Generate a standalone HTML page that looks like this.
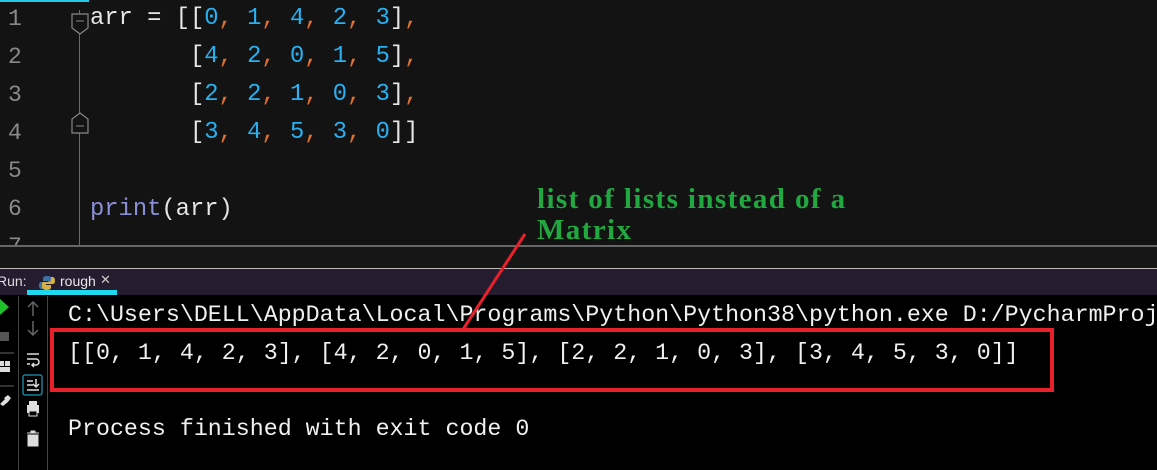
<!DOCTYPE html>
<html><head><style>
body{margin:0;width:1157px;height:470px;background:#000;position:relative;overflow:hidden;font-family:"Liberation Mono",monospace}
.a{position:absolute}
.ln{position:absolute;left:8px;color:#8a8a8a;font-size:23px;font-family:"Liberation Mono",monospace}
.code{position:absolute;left:90px;font-size:23.8px;color:#e6e6e6;white-space:pre;letter-spacing:0}
.n{color:#2ab0f0}.c{color:#e07030}.k{color:#8b8fd8}
.con{position:absolute;left:68px;font-size:23.3px;color:#f0f0f0;white-space:pre}
</style></head><body>
<div class="a" style="left:0;top:0;width:1157px;height:245px;background:#131313"></div>
<div class="a" style="left:0;top:0;width:89px;height:2px;background:#21c8e8"></div>
<div class="a" style="left:79px;top:10px;width:1px;height:235px;background:#6a6a6a"></div>
<svg class="a" style="left:71px;top:12px" width="18" height="124"><path d="M1 2h16v14l-8 6-8-6z" fill="#131313" stroke="#888" stroke-width="1.2"/><path d="M5 9h8" stroke="#888"/><path d="M1 121h16v-14l-8-6-8 6z" fill="#131313" stroke="#888" stroke-width="1.2"/><path d="M5 114h8" stroke="#888"/></svg>
<div class="ln" style="top:6px">1</div><div class="ln" style="top:44px">2</div><div class="ln" style="top:82px">3</div><div class="ln" style="top:120px">4</div><div class="ln" style="top:158px">5</div><div class="ln" style="top:196px">6</div><div class="ln" style="top:234px">7</div>
<div class="code" style="top:5px">arr = [[<span class="n">0</span><span class="c">,</span> <span class="n">1</span><span class="c">,</span> <span class="n">4</span><span class="c">,</span> <span class="n">2</span><span class="c">,</span> <span class="n">3</span>]<span class="c">,</span></div>
<div class="code" style="top:43px">       [<span class="n">4</span><span class="c">,</span> <span class="n">2</span><span class="c">,</span> <span class="n">0</span><span class="c">,</span> <span class="n">1</span><span class="c">,</span> <span class="n">5</span>]<span class="c">,</span></div>
<div class="code" style="top:81px">       [<span class="n">2</span><span class="c">,</span> <span class="n">2</span><span class="c">,</span> <span class="n">1</span><span class="c">,</span> <span class="n">0</span><span class="c">,</span> <span class="n">3</span>]<span class="c">,</span></div>
<div class="code" style="top:119px">       [<span class="n">3</span><span class="c">,</span> <span class="n">4</span><span class="c">,</span> <span class="n">5</span><span class="c">,</span> <span class="n">3</span><span class="c">,</span> <span class="n">0</span>]]</div>
<div class="code" style="top:196px"><span class="k">print</span>(arr)</div>
<div class="a" style="left:0;top:245px;width:1157px;height:2px;background:#666"></div>
<div class="a" style="left:0;top:247px;width:1157px;height:21px;background:#161616"></div>
<div class="a" style="left:0;top:268px;width:1157px;height:1px;background:#bbb"></div>
<div class="a" style="left:0;top:269px;width:1157px;height:26px;background:#251c30"></div>
<div class="a" style="left:0;top:273px;font-family:'Liberation Sans',sans-serif;font-size:14px;color:#ddd;left:-3px">Run:</div>
<svg class="a" style="left:39px;top:275px" width="16" height="16"><path d="M8 1c-4 0-4 2-4 3v2h5v1H2c-2 0-2 3-2 4s1 3 2 3h2v-2c0-2 1-3 3-3h4c2 0 2-1 2-2V4c0-2-2-3-5-3z" fill="#3d72a8"/><path d="M8 15c4 0 4-2 4-3v-2H7V9h7c2 0 2-3 2-4s-1-3-2-3h-2v2c0 2-1 3-3 3H5c-2 0-2 1-2 2v3c0 2 2 3 5 3z" fill="#d8b040"/></svg>
<div class="a" style="left:60px;top:273px;font-family:'Liberation Sans',sans-serif;font-size:14px;color:#e8e8e8">rough</div>
<div class="a" style="left:100px;top:272px;font-family:'Liberation Sans',sans-serif;font-size:13px;color:#ccc">✕</div>
<div class="a" style="left:27px;top:290px;width:90px;height:5px;background:#1ed8f0"></div>
<div class="a" style="left:18px;top:296px;width:1px;height:174px;background:#444"></div>
<div class="a" style="left:47px;top:296px;width:1px;height:174px;background:#444"></div>
<svg class="a" style="left:0;top:296px" width="48" height="174">
<path d="M0 3l9 8-9 8z" fill="#1fc02a"/><rect x="0" y="36" width="9" height="9" fill="#555"/>
<path d="M0 57h14M0 90h14" stroke="#666"/>
<rect x="0" y="65" width="4" height="5" fill="#ddd"/><rect x="5" y="65" width="5" height="5" fill="#ddd"/><rect x="0" y="71" width="10" height="5" fill="#ddd"/>
<path d="M0 108l5-5 3 3-5 4zM4 102l4 4 3-4-3-3z" fill="#ddd"/>
<path d="M33 6v14M28 11l5-5 5 5M33 25v14M28 34l5 5 5-5" stroke="#666" stroke-width="1.5" fill="none"/>
<path d="M27 58h12M27 63h9a3 3 0 010 6h-4M34 67l-2 2 2 2M27 68h3" stroke="#ddd" stroke-width="1.5" fill="none"/>
<rect x="23" y="79" width="19" height="20" rx="2" fill="none" stroke="#1ec0e0"/>
<path d="M27 85h6M27 89h6M27 94h12M36 83v8M33 88l3 3 3-3" stroke="#ddd" stroke-width="1.5" fill="none"/>
<rect x="27" y="109" width="12" height="8" fill="#ddd"/><rect x="29" y="105" width="8" height="4" fill="#ddd"/><rect x="29" y="115" width="8" height="5" fill="#000" stroke="#ddd"/>
<path d="M27 137h12M31 137v-2h4v2M28 139h10v11H28z" fill="#ddd" stroke="#ddd"/>
</svg>
<div class="con" style="top:302px">C:\Users\DELL\AppData\Local\Programs\Python\Python38\python.exe D:/PycharmProjects</div>
<div class="con" style="top:340px">[[0, 1, 4, 2, 3], [4, 2, 0, 1, 5], [2, 2, 1, 0, 3], [3, 4, 5, 3, 0]]</div>
<div class="con" style="top:416px">Process finished with exit code 0</div>
<div class="a" style="left:50px;top:328px;width:996px;height:56px;border:4px solid #e8202a"></div>
<svg class="a" style="left:0;top:0" width="1157" height="470"><path d="M525 234L462 331" stroke="#e8202a" stroke-width="3"/></svg>
<div class="a" style="left:537px;top:184px;font-family:'Liberation Serif',serif;font-weight:bold;font-size:29px;letter-spacing:1.4px;line-height:31px;color:#22a840">list of lists instead of a<br>Matrix</div>
</body></html>
